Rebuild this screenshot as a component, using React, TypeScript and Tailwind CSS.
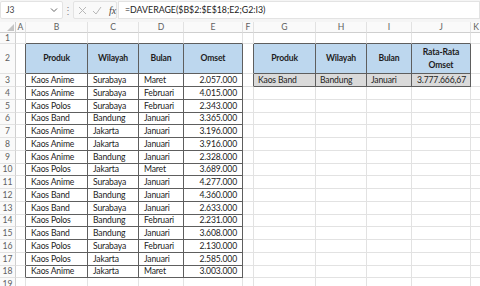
import React from "react";

const colW = ["w-[16px]", "w-[10px]", "w-[62px]", "w-[51px]", "w-[45px]", "w-[59px]", "w-[11px]", "w-[62px]", "w-[51px]", "w-[45px]", "w-[59px]", "w-[11px]", "w-[60px]"];
const letters = ["", "A", "B", "C", "D", "E", "F", "G", "H", "I", "J", "K", ""];

const data: [string, string, string, string][] = [
  ["Kaos Anime", "Surabaya", "Maret", "2.057.000"],
  ["Kaos Anime", "Surabaya", "Februari", "4.015.000"],
  ["Kaos Polos", "Surabaya", "Februari", "2.343.000"],
  ["Kaos Band", "Bandung", "Januari", "3.365.000"],
  ["Kaos Anime", "Jakarta", "Januari", "3.196.000"],
  ["Kaos Anime", "Jakarta", "Januari", "3.916.000"],
  ["Kaos Anime", "Bandung", "Januari", "2.328.000"],
  ["Kaos Polos", "Jakarta", "Maret", "3.689.000"],
  ["Kaos Anime", "Surabaya", "Januari", "4.277.000"],
  ["Kaos Band", "Bandung", "Januari", "4.360.000"],
  ["Kaos Band", "Surabaya", "Januari", "2.633.000"],
  ["Kaos Polos", "Bandung", "Februari", "2.231.000"],
  ["Kaos Band", "Bandung", "Januari", "3.608.000"],
  ["Kaos Polos", "Surabaya", "Februari", "2.130.000"],
  ["Kaos Polos", "Jakarta", "Januari", "2.585.000"],
  ["Kaos Anime", "Jakarta", "Maret", "3.003.000"],
];

function inTable(r: number, c: number) {
  if (r >= 2 && r <= 18 && c >= 2 && c <= 5) return true;
  if (r >= 2 && r <= 3 && c >= 7 && c <= 10) return true;
  return false;
}

function rowH(r: number) {
  if (r === 1) return "h-[11px]";
  if (r === 2) return "h-[30px]";
  const i = r - 3;
  return i % 4 === 3 ? "h-[12px]" : "h-[13px]";
}

type CellInfo = { text: string; kind: "none" | "head" | "left" | "right" | "result" | "resultRight" };

function content(r: number, c: number): CellInfo {
  const heads1 = ["Produk", "Wilayah", "Bulan", "Omset"];
  const heads2 = ["Produk", "Wilayah", "Bulan", "Rata-Rata Omset"];
  if (r === 2 && c >= 2 && c <= 5) return { text: heads1[c - 2], kind: "head" };
  if (r === 2 && c >= 7 && c <= 10) return { text: heads2[c - 7], kind: "head" };
  if (r >= 3 && r <= 18 && c >= 2 && c <= 5) {
    const row = data[r - 3];
    return { text: row[c - 2], kind: c === 5 ? "right" : "left" };
  }
  if (r === 3 && c >= 7 && c <= 10) {
    const res = ["Kaos Band", "Bandung", "Januari", "3.777.666,67"];
    return { text: res[c - 7], kind: c === 10 ? "resultRight" : "result" };
  }
  return { text: "", kind: "none" };
}

function Cell({ r, c }: { r: number; c: number }) {
  const darkR = inTable(r, c) || inTable(r, c + 1);
  const darkB = inTable(r, c) || inTable(r + 1, c);
  const info = content(r, c);
  const br = darkR ? "border-r-[#5e5e5e]" : "border-r-[#e2e2e2]";
  const bb = darkB ? "border-b-[#5e5e5e]" : "border-b-[#e2e2e2]";
  let extra = "";
  if (info.kind === "head") extra = "bg-[#bdd7ee] justify-center text-center font-bold text-[#1d1d1d] leading-[13px]";
  else if (info.kind === "left") extra = "justify-start pl-[5px]";
  else if (info.kind === "right") extra = "justify-end pr-[5px]";
  else if (info.kind === "result") extra = "bg-[#dadada] justify-start pl-[4px]";
  else if (info.kind === "resultRight") extra = "bg-[#dadada] justify-end pr-[4px]";
  return (
    <div className={`${colW[c]} shrink-0 border-r border-b ${br} ${bb} flex items-center overflow-hidden whitespace-nowrap ${extra}`}>
      {info.kind === "head" ? (
        <span className="whitespace-normal w-full px-[4px]">{info.text}</span>
      ) : (
        info.text
      )}
    </div>
  );
}

function Row({ r }: { r: number }) {
  const cells = [];
  for (let c = 1; c < 13; c++) cells.push(<Cell key={c} r={r} c={c} />);
  return (
    <div className={`flex ${rowH(r)}`}>
      <div className={`${colW[0]} shrink-0 border-r border-b border-r-[#cfcfcf] border-b-[#e2e2e2] flex items-center justify-center text-[#616161] bg-[#fafafa] tracking-normal`}>
        {r}
      </div>
      {cells}
    </div>
  );
}

export default function App() {
  const rows = [];
  for (let r = 1; r <= 19; r++) rows.push(<Row key={r} r={r} />);
  return (
    <div className="w-[480px] h-[286px] overflow-hidden bg-white text-[8.6px] tracking-[-0.15px] text-[#222]" style={{ fontFamily: "Lato, 'Noto Sans', sans-serif" }}>
      {/* formula bar */}
      <div className="h-[22px] bg-[#f5f5f5] flex items-start pt-[1px] text-[#333]">
        <div className="w-[63px] h-[18px] bg-white border border-[#e3e3e3] rounded-[2px] flex items-center justify-between pl-[5px] pr-[4px] text-[8.5px] text-[#444]">
          <span>J3</span>
          <svg width="8" height="6" viewBox="0 0 8 6"><path d="M1 1.5 L4 4.5 L7 1.5" fill="none" stroke="#666" strokeWidth="1" /></svg>
        </div>
        <div className="w-[10px] h-[18px] flex items-center justify-center text-[#888] text-[10px]">⋮</div>
        <div className="w-[44px] h-[18px] flex items-center gap-[5px] pl-[4px] border border-[#e3e3e3] rounded-[2px] bg-[#f9f9f9]">
          <svg width="9" height="9" viewBox="0 0 9 9"><path d="M1 1 L8 8 M8 1 L1 8" stroke="#b8b8b8" strokeWidth="1" /></svg>
          <svg width="10" height="9" viewBox="0 0 10 9"><path d="M1 5 L4 8 L9 1" fill="none" stroke="#b8b8b8" strokeWidth="1" /></svg>
          <span className="italic text-[#444] text-[10px] ml-[2px]" style={{ fontFamily: "'Liberation Serif', serif" }}>fx</span>
        </div>
        <div className="flex-1 h-[18px] bg-white border border-[#e3e3e3] flex items-center pl-[6px] text-[8.8px] tracking-normal text-[#222] ml-[1px]">
          =DAVERAGE($B$2:$E$18;E2;G2:I3)
        </div>
      </div>
      {/* column headers */}
      <div className="flex h-[11px] bg-[#fafafa] tracking-normal">
        <div className={`${colW[0]} shrink-0 border-r border-b border-r-[#cfcfcf] border-b-[#cfcfcf] relative`}>
          <svg className="absolute right-[1px] bottom-[1px]" width="7" height="7" viewBox="0 0 7 7"><path d="M7 0 L7 7 L0 7 Z" fill="#c4c4c4" /></svg>
        </div>
        {letters.slice(1).map((l, i) => (
          <div key={i} className={`${colW[i + 1]} shrink-0 border-r border-b border-r-[#e2e2e2] border-b-[#cfcfcf] flex items-center justify-center text-[#616161]`}>
            {l}
          </div>
        ))}
      </div>
      {rows}
    </div>
  );
}
